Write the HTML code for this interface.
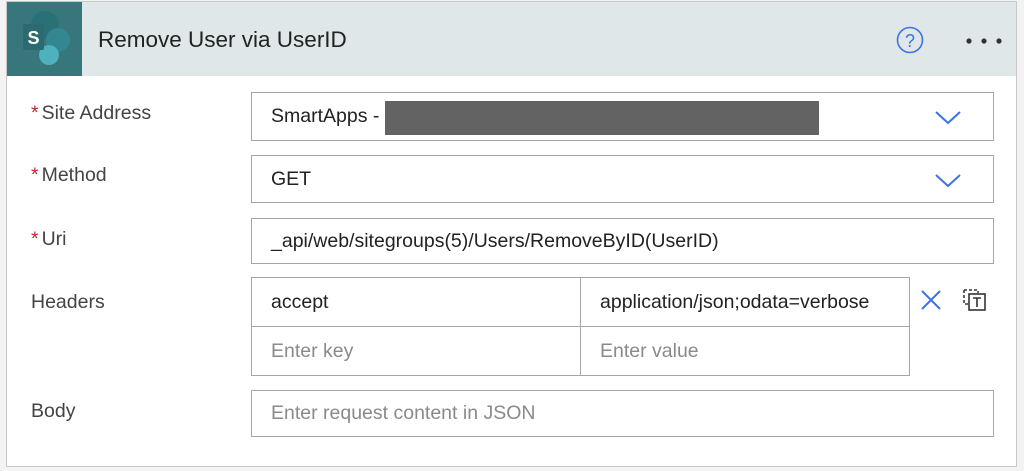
<!DOCTYPE html>
<html><head><meta charset="utf-8"><style>
body{margin:0;width:1024px;height:471px;background:#f3f3f3;font-family:"Liberation Sans",Arial,sans-serif;position:relative;overflow:hidden}
.card{position:absolute;left:6px;top:1px;width:1009px;height:464px;background:#fff;border:1px solid #c8c8c8}
.hdr{position:absolute;left:0;top:0;width:1009px;height:74px;background:#dfe7e8}
.tile{position:absolute;left:0;top:0;width:75px;height:74px;background:#37767b}
.title{position:absolute;left:91px;top:25px;font-size:22.5px;color:#222}
.lbl{position:absolute;left:24px;font-size:19.5px;color:#444}
.lbl b{color:#c4262e;font-weight:normal;margin-right:3px}
.in{position:absolute;left:244px;width:743px;border:1px solid #a6a6a6;box-sizing:border-box;font-size:19.5px;color:#222;padding-left:19px;background:#fff}
.cell{position:absolute;border:1px solid #a6a6a6;box-sizing:border-box;font-size:19.5px;color:#222;padding-left:19px;background:#fff}
.in.ph,.cell.ph{color:#8a8a8a}
</style></head><body>
<div class="card">
 <div class="hdr">
  <div class="tile">
   <svg width="75" height="74" viewBox="0 0 75 74">
    <circle cx="38" cy="23" r="14" fill="#2a7177"/>
    <circle cx="51" cy="38" r="12" fill="#328790"/>
    <circle cx="42" cy="53" r="10" fill="#4fb1bd"/>
    <rect x="16" y="22" width="21" height="26" rx="2" fill="#2b6a70"/>
    <text x="26.5" y="42" text-anchor="middle" font-family="Liberation Sans" font-weight="bold" font-size="18" fill="#fff">S</text>
   </svg>
  </div>
  <div class="title">Remove User via UserID</div>
  <svg style="position:absolute;left:889px;top:24px" width="28" height="28" viewBox="0 0 28 28">
   <circle cx="14" cy="14" r="12.5" fill="none" stroke="#3b73e8" stroke-width="1.6"/>
   <text x="14" y="21" text-anchor="middle" font-family="Liberation Sans" font-size="18" fill="#3b73e8">?</text>
  </svg>
  <svg style="position:absolute;left:958px;top:35px" width="40" height="8"><circle cx="4" cy="4" r="2.6" fill="#333"/><circle cx="19" cy="4" r="2.6" fill="#333"/><circle cx="34" cy="4" r="2.6" fill="#333"/></svg>
 </div>

 <div class="lbl" style="top:100px"><b>*</b>Site Address</div>
 <div class="in" style="top:90px;height:49px;line-height:47px">SmartApps -
  <span style="position:absolute;left:133px;top:8px;width:434px;height:34px;background:#636363"></span>
  <svg style="position:absolute;right:32px;top:18px" width="26" height="14"><path d="M1 1 L13 12 L25 1" fill="none" stroke="#3b73e8" stroke-width="2"/></svg>
 </div>

 <div class="lbl" style="top:162px"><b>*</b>Method</div>
 <div class="in" style="top:153px;height:48px;line-height:46px">GET
  <svg style="position:absolute;right:32px;top:18px" width="26" height="14"><path d="M1 1 L13 12 L25 1" fill="none" stroke="#3b73e8" stroke-width="2"/></svg>
 </div>

 <div class="lbl" style="top:226px"><b>*</b>Uri</div>
 <div class="in" style="top:216px;height:46px;line-height:44px">_api/web/sitegroups(5)/Users/RemoveByID(UserID)</div>

 <div class="lbl" style="top:289px">Headers</div>
 <div class="cell" style="left:244px;top:275px;width:330px;height:50px;line-height:48px">accept</div>
 <div class="cell" style="left:573px;top:275px;width:330px;height:50px;line-height:48px">application/json;odata=verbose</div>
 <div class="cell ph" style="left:244px;top:324px;width:330px;height:50px;line-height:48px">Enter key</div>
 <div class="cell ph" style="left:573px;top:324px;width:330px;height:50px;line-height:48px">Enter value</div>
 <svg style="position:absolute;left:913px;top:287px" width="22" height="22"><path d="M2 2 L20 20 M20 2 L2 20" stroke="#3b73e8" stroke-width="2"/></svg>
 <svg style="position:absolute;left:955px;top:285px" width="26" height="26" viewBox="0 0 26 26">
  <path d="M2 3 H16 V6 M2 3 V17 H6" fill="none" stroke="#333" stroke-width="1.5" stroke-dasharray="3 2"/>
  <rect x="7" y="7" width="16" height="16" fill="none" stroke="#333" stroke-width="1.6"/>
  <path d="M11 11 H19 M15 11 V20" stroke="#333" stroke-width="1.6"/>
 </svg>

 <div class="lbl" style="top:398px">Body</div>
 <div class="in ph" style="top:388px;height:47px;line-height:45px">Enter request content in JSON</div>
</div>
</body></html>
